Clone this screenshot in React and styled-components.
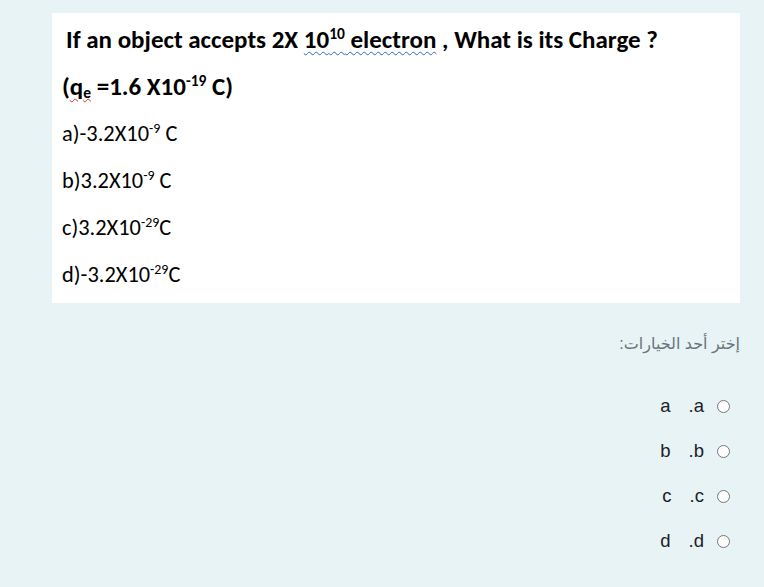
import React from "react";
import styled, { createGlobalStyle } from "styled-components";

const Global = createGlobalStyle`
  html, body { margin: 0; padding: 0; background: #e7f3f5; }
  body { width: 764px; height: 587px; overflow: hidden; }
`;

const Page = styled.div`
  padding: 13px 24px 0 52px;
  display: flex;
  flex-direction: column;
`;

const Card = styled.div`
  width: 688px;
  background: #ffffff;
  padding: 4px 0 4px 10px;
  box-sizing: border-box;
  color: #000;
  font-family: Carlito, "Open Sans", Lato, sans-serif;
`;

const Line = styled.p`
  margin: 0 0 1px 0;
  height: 46px;
  line-height: 46px;
  white-space: nowrap;
  font-size: ${(p) => (p.$bold ? "25px" : "22.4px")};
  font-weight: ${(p) => (p.$bold ? 700 : 400)};
  padding-left: ${(p) => p.$indent || 0}px;
`;

const Sup = styled.sup`
  font-size: 0.62em;
  line-height: 0;
  vertical-align: 0.6em;
`;

const Sub = styled.sub`
  font-size: 0.62em;
  line-height: 0;
  vertical-align: -0.2em;
`;

const Squiggle = styled.span`
  text-decoration: underline wavy ${(p) => p.$color};
  text-decoration-thickness: 1px;
  text-underline-offset: 3px;
`;

const Answer = styled.div`
  display: flex;
  flex-direction: column;
  align-items: stretch;
  width: 688px;
  font-family: "Liberation Sans", "DejaVu Sans", Arial, sans-serif;
  direction: rtl;
`;

const Prompt = styled.div`
  margin-top: 30px;
  height: 22px;
  line-height: 22px;
  font-size: 16px;
  color: #6a737b;
`;

const Options = styled.div`
  margin-top: 38px;
  display: flex;
  flex-direction: column;
  gap: 19px;
  padding-right: 10px;
`;

const Row = styled.label`
  display: flex;
  align-items: center;
  height: 26px;
  font-size: 18.5px;
  color: #1d2125;
`;

const Radio = styled.span`
  width: 13px;
  height: 13px;
  box-sizing: border-box;
  border: 1px solid #767676;
  border-radius: 50%;
  background: #fff;
  margin-left: 13px;
  flex: none;
`;

const Num = styled.span`
  margin-left: 18px;
`;

const options = ["a", "b", "c", "d"];

export default function App() {
  return (
    <>
      <Global />
      <Page>
        <Card>
          <Line $bold $indent={4}>
            If an object accepts 2X{" "}
            <Squiggle $color="#3a5fcd">
              10<Sup>10</Sup> electron
            </Squiggle>{" "}
            , What is its Charge ?
          </Line>
          <Line $bold>
            (<Squiggle $color="#e03030">q<Sub>e</Sub></Squiggle> =1.6 X10<Sup>-19</Sup> C)
          </Line>
          <Line>a)-3.2X10<Sup>-9</Sup> C</Line>
          <Line>b)3.2X10<Sup>-9</Sup> C</Line>
          <Line>c)3.2X10<Sup>-29</Sup>C</Line>
          <Line>d)-3.2X10<Sup>-29</Sup>C</Line>
        </Card>
        <Answer>
          <Prompt>إختر أحد الخيارات:</Prompt>
          <Options>
            {options.map((o) => (
              <Row key={o}>
                <Radio />
                <Num dir="rtl">{o}.</Num>
                <span>{o}</span>
              </Row>
            ))}
          </Options>
        </Answer>
      </Page>
    </>
  );
}
